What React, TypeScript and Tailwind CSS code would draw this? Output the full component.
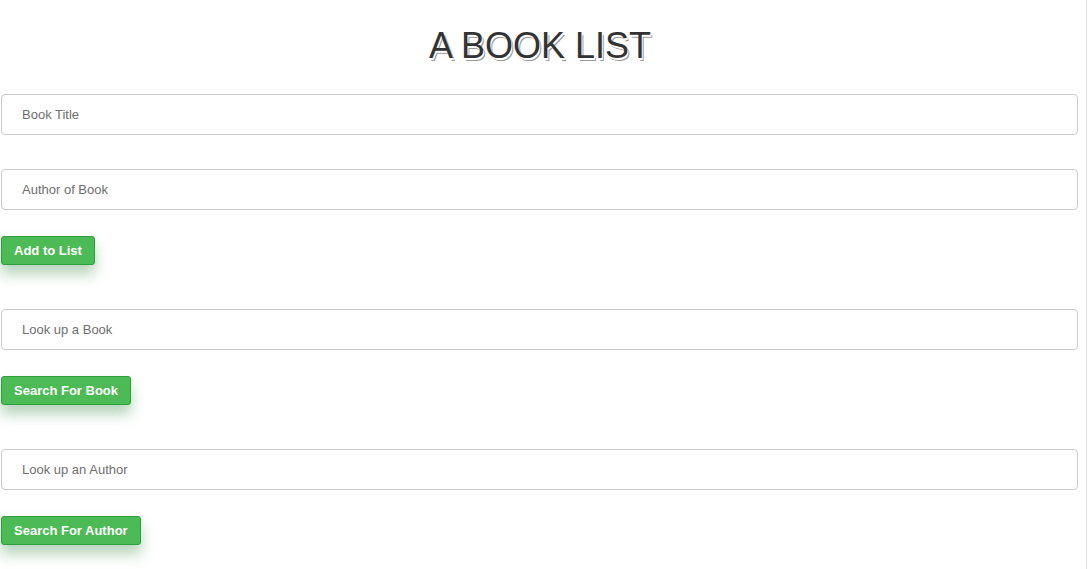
import { useState } from "react";

function Field({ placeholder, className = "" }: { placeholder: string; className?: string }) {
    return (
        <input
            type="text"
            placeholder={placeholder}
            className={"block w-[1077px] h-[41px] ml-[1px] rounded-[4px] border border-[#cccccc] bg-white pl-[20px] text-[13px] text-[#333] placeholder:text-[#6f6f6f] outline-none " + className}
        />
    );
}

function GreenButton({ label, className = "" }: { label: string; className?: string }) {
    return (
        <button
            className={"block ml-[1px] h-[29px] px-[12px] rounded-[3px] border border-[#2f9e3c] bg-[#4cbb55] text-[13px] font-bold text-white shadow-[0_9px_14px_rgba(40,130,55,0.35)] " + className}
        >
            {label}
        </button>
    );
}

export default function App() {
    const [books] = useState<string[]>([]);

    return (
        <div className="relative w-[1088px] h-[569px] bg-white overflow-hidden font-['Liberation_Sans',Arial,sans-serif]">
            <div className="absolute top-0 right-0 h-full w-[2px] border-l border-[#e3e3e3] bg-white"></div>

            <h1 className="pt-[24px] pr-[8px] h-[94px] text-center text-[36px] leading-[44px] font-normal text-[#333333] [text-shadow:1px_2px_0_#ffffff,2px_3px_0_#9a9a9a]">
                A BOOK LIST
            </h1>

            <Field placeholder="Book Title" />
            <Field placeholder="Author of Book" className="mt-[34px]" />
            <GreenButton label="Add to List" className="mt-[26px]" />

            <Field placeholder="Look up a Book" className="mt-[44px]" />
            <GreenButton label="Search For Book" className="mt-[26px]" />

            <Field placeholder="Look up an Author" className="mt-[44px]" />
            <GreenButton label="Search For Author" className="mt-[26px]" />

            {books.map((b) => (
                <div key={b}>{b}</div>
            ))}
        </div>
    );
}
